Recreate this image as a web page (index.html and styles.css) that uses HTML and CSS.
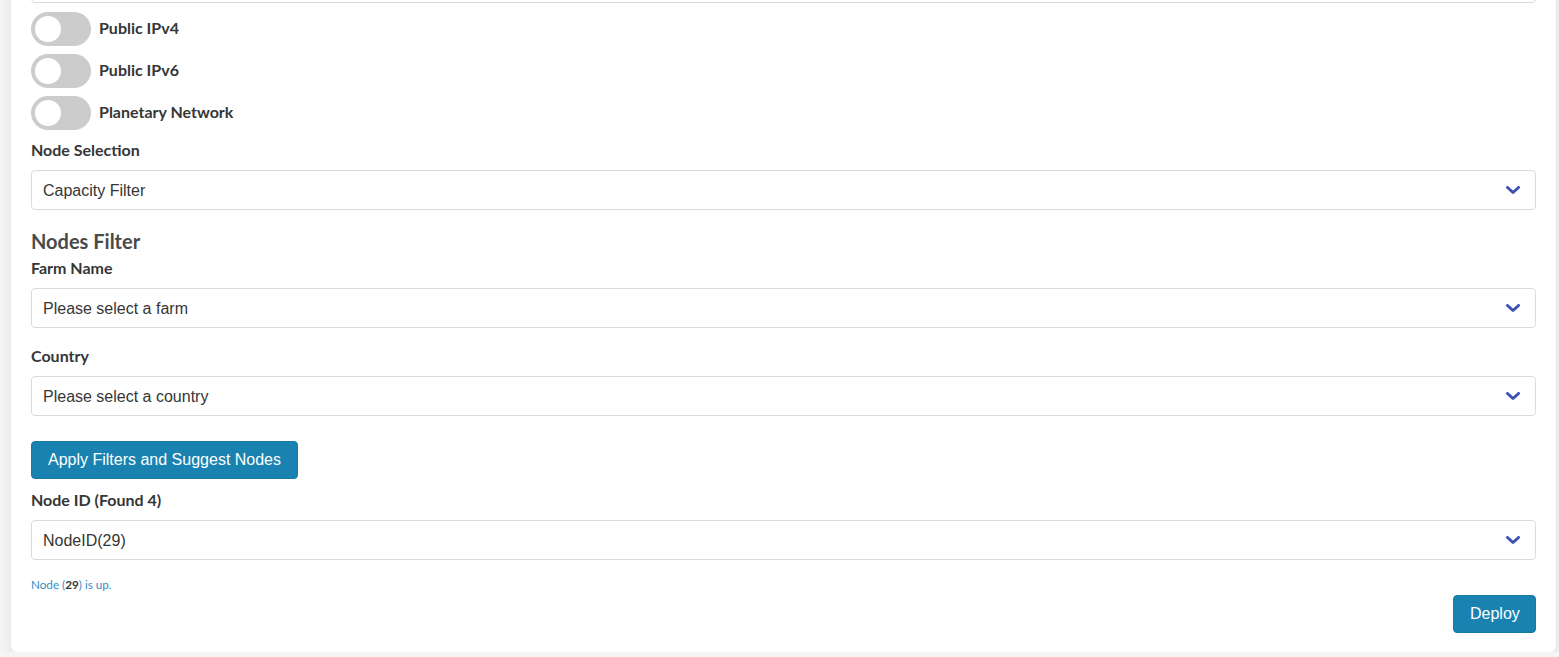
FILE: index.html
```html
<!DOCTYPE html>
<html lang="en">
<head>
<meta charset="utf-8">
<title>Deploy</title>
<link rel="stylesheet" href="styles.css">
</head>
<body>
<div class="card">
  <div class="select top-select"><span class="select-text">&nbsp;</span></div>

  <div class="toggles">
    <div class="toggle-row"><span class="switch"><span class="knob"></span></span><span class="toggle-label">Public IPv4</span></div>
    <div class="toggle-row"><span class="switch"><span class="knob"></span></span><span class="toggle-label">Public IPv6</span></div>
    <div class="toggle-row"><span class="switch"><span class="knob"></span></span><span class="toggle-label">Planetary Network</span></div>
  </div>

  <div class="field first-field">
    <label class="label">Node Selection</label>
    <div class="select"><span class="select-text">Capacity Filter</span>
      <svg class="chevron" width="14" height="9" viewBox="0 0 14 9"><polyline points="1.5,1.5 7,6.5 12.5,1.5" fill="none" stroke="#3f51b5" stroke-width="3" stroke-linecap="round" stroke-linejoin="round"/></svg>
    </div>
  </div>

  <h3 class="title">Nodes Filter</h3>

  <div class="field">
    <label class="label">Farm Name</label>
    <div class="select"><span class="select-text">Please select a farm</span>
      <svg class="chevron" width="14" height="9" viewBox="0 0 14 9"><polyline points="1.5,1.5 7,6.5 12.5,1.5" fill="none" stroke="#3f51b5" stroke-width="3" stroke-linecap="round" stroke-linejoin="round"/></svg>
    </div>
  </div>

  <div class="field">
    <label class="label">Country</label>
    <div class="select"><span class="select-text">Please select a country</span>
      <svg class="chevron" width="14" height="9" viewBox="0 0 14 9"><polyline points="1.5,1.5 7,6.5 12.5,1.5" fill="none" stroke="#3f51b5" stroke-width="3" stroke-linecap="round" stroke-linejoin="round"/></svg>
    </div>
  </div>

  <button class="btn apply-btn">Apply Filters and Suggest Nodes</button>

  <div class="field node-field">
    <label class="label">Node ID (Found 4)</label>
    <div class="select"><span class="select-text">NodeID(29)</span>
      <svg class="chevron" width="14" height="9" viewBox="0 0 14 9"><polyline points="1.5,1.5 7,6.5 12.5,1.5" fill="none" stroke="#3f51b5" stroke-width="3" stroke-linecap="round" stroke-linejoin="round"/></svg>
    </div>
  </div>

  <p class="help">Node (<strong>29</strong>) is up.</p>

  <div class="actions">
    <button class="btn deploy-btn">Deploy</button>
  </div>
</div>
</body>
</html>
```

FILE: styles.css
```css
html, body {
  margin: 0;
  padding: 0;
  background: #f5f5f5;
  overflow: hidden;
}

body {
  font-family: "Liberation Sans", Arial, sans-serif;
  color: #363636;
}

.card {
  box-sizing: border-box;
  width: 1545px;
  margin: -57px 0 0 11px;
  padding: 20px 20px 19px 20px;
  background: #fff;
  border-radius: 6px;
  box-shadow: 0 0.5em 1em -0.125em rgba(10, 10, 10, 0.1), 0 0 0 1px rgba(10, 10, 10, 0.02);
}

.select {
  position: relative;
  box-sizing: border-box;
  height: 40px;
  border: 1px solid #dbdbdb;
  border-radius: 4px;
  background: #fff;
  display: flex;
  align-items: center;
  padding: 1px 11px 0 11px;
  font-family: "Liberation Sans", Arial, sans-serif;
  font-size: 16px;
  color: #363636;
}

.chevron {
  position: absolute;
  right: 15px;
  top: 15px;
}

.toggles {
  display: flex;
  flex-direction: column;
  gap: 8px;
  margin-top: 9px;
}

.toggle-row {
  display: flex;
  align-items: center;
  gap: 8px;
  height: 34px;
}

.switch {
  position: relative;
  width: 60px;
  height: 34px;
  border-radius: 34px;
  background: #ccc;
  flex: none;
}

.knob {
  position: absolute;
  left: 4px;
  top: 4px;
  width: 26px;
  height: 26px;
  border-radius: 50%;
  background: #fff;
}

.toggle-label,
.label {
  font-family: Lato, "Liberation Sans", sans-serif;
  font-weight: 700;
  font-size: 16px;
  color: #363636;
}

.toggle-label {
  line-height: 20px;
  padding-bottom: 2px;
}

.label {
  display: block;
  line-height: 20px;
  margin-bottom: 10px;
}

.field {
  margin-top: 18px;
}

.first-field {
  margin-top: 10px;
}

.title {
  margin: 19px 0 0 0;
  font-family: Lato, "Liberation Sans", sans-serif;
  font-weight: 700;
  font-size: 20px;
  line-height: 24px;
  color: #4a4a4a;
}

.title + .field {
  margin-top: 5px;
}

.btn {
  box-sizing: border-box;
  height: 38px;
  border: 1px solid #1a7aa6;
  border-radius: 4px;
  background: #1982b0;
  color: #fff;
  font-family: "Liberation Sans", Arial, sans-serif;
  font-size: 16px;
  padding: 0 16px;
  cursor: pointer;
}

.apply-btn {
  display: block;
  margin-top: 25px;
  width: 267px;
}

.node-field {
  margin-top: 11px;
}

.help {
  margin: 16px 0 0 0;
  font-family: Lato, "Liberation Sans", sans-serif;
  font-size: 11.7px;
  line-height: 16px;
  color: #2f8dc8;
}

.help strong {
  color: #363636;
  font-weight: 700;
}

.actions {
  display: flex;
  justify-content: flex-end;
  margin-top: 3px;
}

.deploy-btn {
  width: 83px;
}
```
